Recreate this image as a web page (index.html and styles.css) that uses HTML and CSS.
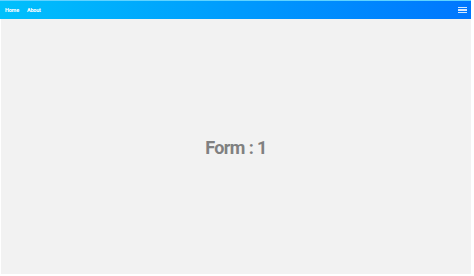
FILE: index.html
```html
<!DOCTYPE html>
<html>
<head>
<meta charset="utf-8">
<link rel="stylesheet" href="styles.css">
</head>
<body>
<div class="page">
  <nav class="navbar">
    <div class="links">
      <a class="link" href="#">Home</a>
      <a class="link" href="#">About</a>
    </div>
    <div class="burger">
      <span></span><span></span><span></span>
    </div>
  </nav>
  <main class="content">
    <h1 class="title">Form : 1</h1>
  </main>
</div>
</body>
</html>
```

FILE: styles.css
```css
html, body {
  margin: 0;
  padding: 0;
  background: #ffffff;
  height: 100%;
}
body {
  font-family: Roboto, "Liberation Sans", Arial, sans-serif;
}
.page {
  display: flex;
  flex-direction: column;
  height: 276px;
  box-sizing: border-box;
  padding: 0 3px 2px 0;
}
.navbar {
  height: 19px;
  flex: none;
  display: flex;
  align-items: center;
  justify-content: space-between;
  background: linear-gradient(to right, #00c0fc, #0076fe);
  border-top: 1px solid #5fd3ff;
  box-sizing: border-box;
  padding: 0 4px 0 5px;
}
.links {
  display: flex;
  gap: 8px;
}
.link {
  color: #ffffff;
  font-size: 5.5px;
  font-weight: bold;
  letter-spacing: -0.2px;
  text-decoration: none;
}
.burger {
  display: flex;
  flex-direction: column;
  gap: 1px;
  width: 9px;
}
.burger span {
  display: block;
  height: 1.5px;
  background: #d4e8ff;
}
.content {
  flex: 1;
  background: #f2f2f2;
  margin-left: 1px;
  padding-top: 2px;
  display: flex;
  align-items: center;
  justify-content: center;
}
.title {
  margin: 0;
  font-size: 18px;
  font-weight: bold;
  letter-spacing: -0.6px;
  color: #808080;
}
```
